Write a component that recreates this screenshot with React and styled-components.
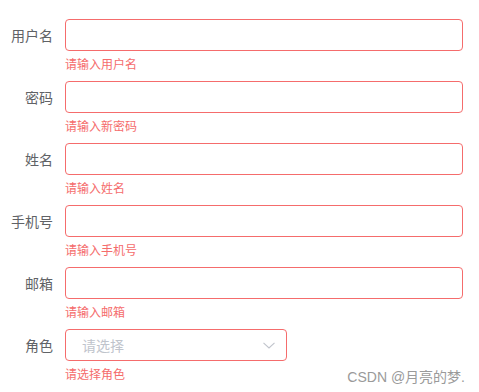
import styled, { createGlobalStyle } from "styled-components";

const GlobalStyle = createGlobalStyle`
  html, body {
    margin: 0;
    padding: 0;
    background: #fff;
  }
  body {
    font-family: "Liberation Sans", "Noto Sans CJK SC", sans-serif;
  }
`;

const fields = [
  { label: "用户名", error: "请输入用户名" },
  { label: "密码", error: "请输入新密码", type: "password" },
  { label: "姓名", error: "请输入姓名" },
  { label: "手机号", error: "请输入手机号" },
  { label: "邮箱", error: "请输入邮箱" },
];

function ArrowDown() {
  return (
    <svg width="12" height="7" viewBox="0 0 12 7" fill="none">
      <path d="M0.5 0.8 L6 6 L11.5 0.8" stroke="#c0c4cc" strokeWidth="1.1" />
    </svg>
  );
}

export default function App() {
  return (
    <Page>
      <GlobalStyle />
      <Form>
        {fields.map((f) => (
          <Item key={f.label}>
            <Label>{f.label}</Label>
            <Content>
              <Input type={f.type || "text"} />
              <ErrorText>{f.error}</ErrorText>
            </Content>
          </Item>
        ))}
        <Item>
          <Label>角色</Label>
          <Content>
            <Select>
              <Placeholder>请选择</Placeholder>
              <ArrowDown />
            </Select>
            <ErrorText>请选择角色</ErrorText>
          </Content>
        </Item>
      </Form>
      <Watermark>CSDN @月亮的梦.</Watermark>
    </Page>
  );
}

const Page = styled.div`
  position: relative;
  width: 479px;
  height: 392px;
  overflow: hidden;
`;

const Form = styled.form`
  padding-top: 19px;
  display: flex;
  flex-direction: column;
`;

const Item = styled.div`
  display: flex;
  align-items: flex-start;
  margin-bottom: 10px;
`;

const Label = styled.label`
  width: 65px;
  box-sizing: border-box;
  padding-right: 12px;
  text-align: right;
  font-size: 14px;
  line-height: 32px;
  color: #606266;
  font-family: "Noto Sans CJK SC", sans-serif;
`;

const Content = styled.div`
  display: flex;
  flex-direction: column;
`;

const Input = styled.input`
  width: 398px;
  height: 32px;
  box-sizing: border-box;
  border: 1px solid #f56c6c;
  border-radius: 4px;
  padding: 0 15px;
  outline: none;
  font-size: 14px;
  color: #606266;
  background: #fff;
`;

const Select = styled.div`
  width: 222px;
  height: 32px;
  box-sizing: border-box;
  border: 1px solid #f56c6c;
  border-radius: 4px;
  padding: 0 11px 0 16px;
  display: flex;
  align-items: center;
  justify-content: space-between;
`;

const Placeholder = styled.span`
  font-size: 14px;
  color: #c0c4cc;
  font-family: "Noto Sans CJK SC", sans-serif;
`;

const ErrorText = styled.div`
  margin-top: 6px;
  font-size: 12px;
  line-height: 14px;
  color: #f56c6c;
  font-family: "Noto Sans CJK SC", sans-serif;
`;

const Watermark = styled.div`
  position: absolute;
  right: 14px;
  top: 368px;
  font-size: 14px;
  line-height: 18px;
  color: #9a9a9a;
  font-family: "Liberation Sans", "Noto Sans CJK SC", sans-serif;
`;
